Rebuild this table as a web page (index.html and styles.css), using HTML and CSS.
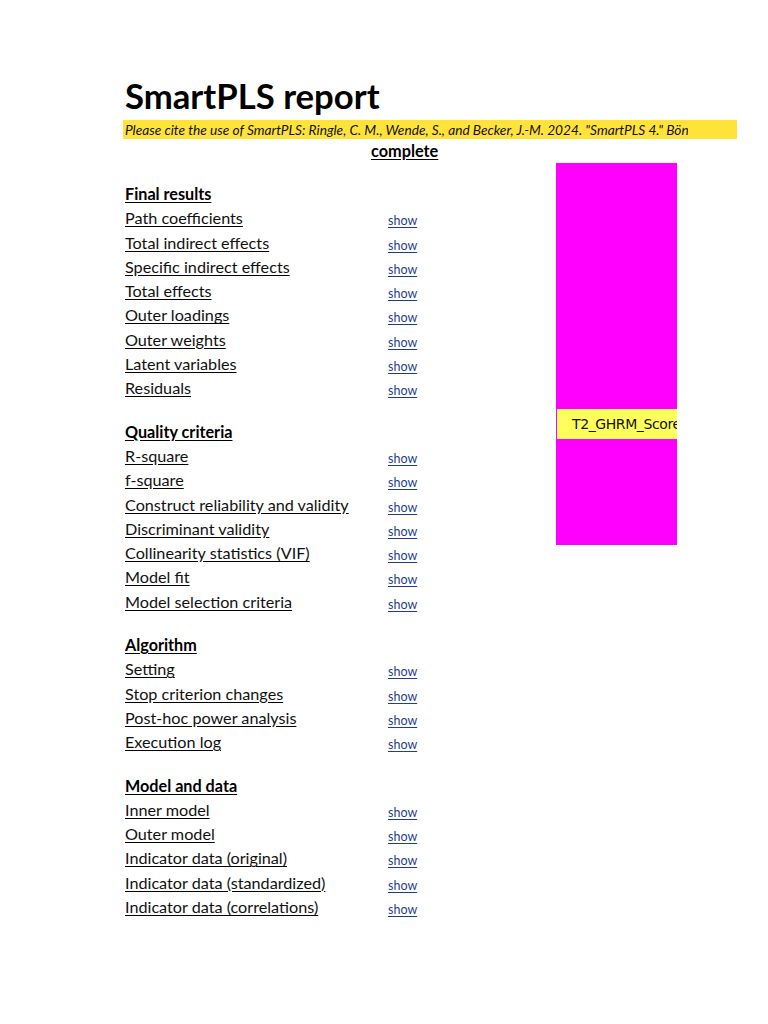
FILE: index.html
```html
<!DOCTYPE html>
<html lang="en">
<head>
<meta charset="utf-8">
<title>SmartPLS report</title>
<link rel="stylesheet" href="styles.css">
</head>
<body>
<div class="page">
  <h1 class="title">SmartPLS report</h1>
  <div class="cite"><span class="cite-text">Please cite the use of SmartPLS: Ringle, C. M., Wende, S., and Becker, J.-M. 2024. "SmartPLS 4." Bönningstedt: SmartPLS GmbH</span></div>
  <div class="complete-row"><span class="complete">complete</span></div>

  <section class="section">
    <div class="row"><span class="head">Final results</span></div>
    <div class="row"><span class="item">Path coefficients</span><a class="show">show</a></div>
    <div class="row"><span class="item">Total indirect effects</span><a class="show">show</a></div>
    <div class="row"><span class="item">Specific indirect effects</span><a class="show">show</a></div>
    <div class="row"><span class="item">Total effects</span><a class="show">show</a></div>
    <div class="row"><span class="item">Outer loadings</span><a class="show">show</a></div>
    <div class="row"><span class="item">Outer weights</span><a class="show">show</a></div>
    <div class="row"><span class="item">Latent variables</span><a class="show">show</a></div>
    <div class="row"><span class="item">Residuals</span><a class="show">show</a></div>
  </section>

  <section class="section">
    <div class="row"><span class="head">Quality criteria</span></div>
    <div class="row"><span class="item">R-square</span><a class="show">show</a></div>
    <div class="row"><span class="item">f-square</span><a class="show">show</a></div>
    <div class="row"><span class="item">Construct reliability and validity</span><a class="show">show</a></div>
    <div class="row"><span class="item">Discriminant validity</span><a class="show">show</a></div>
    <div class="row"><span class="item">Collinearity statistics (VIF)</span><a class="show">show</a></div>
    <div class="row"><span class="item">Model fit</span><a class="show">show</a></div>
    <div class="row"><span class="item">Model selection criteria</span><a class="show">show</a></div>
  </section>

  <section class="section">
    <div class="row"><span class="head">Algorithm</span></div>
    <div class="row"><span class="item">Setting</span><a class="show">show</a></div>
    <div class="row"><span class="item">Stop criterion changes</span><a class="show">show</a></div>
    <div class="row"><span class="item">Post-hoc power analysis</span><a class="show">show</a></div>
    <div class="row"><span class="item">Execution log</span><a class="show">show</a></div>
  </section>

  <section class="section">
    <div class="row"><span class="head">Model and data</span></div>
    <div class="row"><span class="item">Inner model</span><a class="show">show</a></div>
    <div class="row"><span class="item">Outer model</span><a class="show">show</a></div>
    <div class="row"><span class="item">Indicator data (original)</span><a class="show">show</a></div>
    <div class="row"><span class="item">Indicator data (standardized)</span><a class="show">show</a></div>
    <div class="row"><span class="item">Indicator data (correlations)</span><a class="show">show</a></div>
  </section>

  <div class="shape">
    <div class="shape-label">T2_GHRM_Score</div>
  </div>
</div>
</body>
</html>
```

FILE: styles.css
```css
html, body {
  margin: 0;
  padding: 0;
  background: #ffffff;
}

body {
  font-family: Lato, "Open Sans", sans-serif;
  color: #000000;
}

.page {
  position: relative;
  padding: 72px 0 0 123px;
  height: 952px;
}

.title {
  margin: 0 0 0 2px;
  font-size: 34.7px;
  font-weight: 700;
  line-height: 48px;
}

.cite {
  width: 614px;
  height: 19px;
  background: #ffe33a;
  font-style: italic;
  font-size: 13.7px;
  line-height: 19px;
  padding-left: 2px;
  box-sizing: border-box;
}

.cite-text {
  display: block;
  width: 563px;
  overflow: hidden;
  white-space: nowrap;
  color: #111;
}

.complete-row {
  height: 24px;
  line-height: 24px;
  padding-left: 248px;
}

.complete {
  font-weight: 700;
  font-size: 16.3px;
  text-decoration: underline;
  text-underline-offset: 2px;
}

.section {
  margin-top: 19px;
}

.row {
  display: grid;
  grid-template-columns: 263px auto;
  height: 24.3px;
  line-height: 24px;
  padding-left: 2px;
}

.head {
  font-weight: 700;
  font-size: 16.2px;
  text-decoration: underline;
  text-underline-offset: 2px;
}

.item {
  font-size: 16.2px;
  text-decoration: underline;
  text-decoration-color: #000;
  text-underline-offset: 2px;
  color: #111;
}

.show {
  font-size: 12.5px;
  color: #1d3f8f;
  text-decoration: underline;
  text-underline-offset: 2px;
  padding-top: 3px;
}

.shape {
  position: absolute;
  left: 556px;
  top: 163px;
  width: 121px;
  height: 382px;
  background: #ff00ff;
  overflow: hidden;
}

.shape-label {
  position: absolute;
  left: 1px;
  top: 246px;
  width: 125px;
  height: 30px;
  background: #ffff5c;
  font-family: "DejaVu Sans", "Liberation Sans", sans-serif;
  font-size: 14px;
  line-height: 30px;
  padding-left: 15px;
  white-space: nowrap;
  color: #111;
  letter-spacing: -0.4px;
}
```
